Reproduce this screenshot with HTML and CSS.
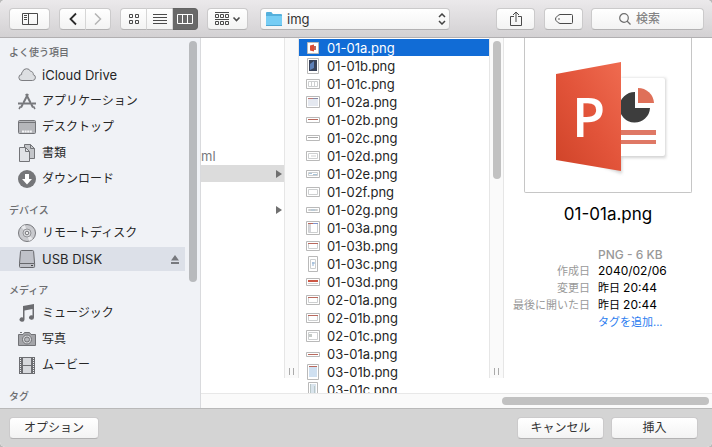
FILE: index.html
```html
<!DOCTYPE html>
<html lang="ja">
<head>
<meta charset="utf-8">
<title>img</title>
<link rel="stylesheet" href="styles.css">
</head>
<body>
<main class="dialog">
  <header class="toolbar">
    <button class="btn tool" aria-label="サイドバー">
      <svg width="16" height="12" viewBox="0 0 16 12" fill="none" stroke="#4a4a4a"><path d="M.5.5h15v11H.5zM6.500.5v11M2 2.500h3M2 4.500h3M2 6.500h3"/></svg>
    </button>
    <div class="group nav-group">
      <button class="btn" aria-label="戻る"><svg width="8" height="14" viewBox="0 0 8 14" fill="none" stroke="#2c2c2c" stroke-width="1.800"><path d="M7 1.500L1.500 7 7 12.500"/></svg></button>
      <button class="btn" aria-label="進む"><svg width="8" height="14" viewBox="0 0 8 14" fill="none" stroke="#b4b4b4" stroke-width="1.500"><path d="M1 1.500L6.500 7 1 12.500"/></svg></button>
    </div>
    <div class="group view-group">
      <button class="btn" aria-label="アイコン"><svg width="10" height="10" viewBox="0 0 10 10" fill="none" stroke="#4a4a4a"><path d="M.5.5h3v3h-3zM6.500.5h3v3h-3zM.5 6.500h3v3h-3zM6.500 6.500h3v3h-3z"/></svg></button>
      <button class="btn" aria-label="リスト"><svg width="14" height="10" viewBox="0 0 14 10" stroke="#4a4a4a"><path d="M0 .5h14M0 3.500h14M0 6.500h14M0 9.500h14"/></svg></button>
      <button class="btn on" aria-label="カラム"><svg width="16" height="10" viewBox="0 0 16 10" fill="none" stroke="#fff"><path d="M.5.5h15v9H.5zM5.500.5v9M10.500.5v9"/></svg></button>
    </div>
    <button class="btn tool" aria-label="グループ">
      <svg width="26" height="14" viewBox="0 0 26 14" fill="none" stroke="#4a4a4a"><path d="M0 .5h14M0 7.500h14M.5 2.500h3v3h-3zM5.500 2.500h3v3h-3zM10.500 2.500h3v3h-3zM.5 9.500h3v3h-3zM5.500 9.500h3v3h-3zM10.500 9.500h3v3h-3z"/><path d="M18.500 5.500l3 3 3-3" stroke-width="1.600"/></svg>
    </button>
    <label class="location">
      <svg class="folder" width="16" height="14" viewBox="0 0 16 14"><path d="M0 13V1q0-1 1-1h4q1 0 1 1l1 1h8q1 0 1 1v10z" fill="#55b0dc"/><path d="M0 4h16v9H0z" fill="#76cdf4"/><path d="M0 13.500h16" stroke="#4fa7d2"/></svg>
      <select class="popup" aria-label="場所"><option>img</option></select>
      <svg class="updown" width="8" height="12" viewBox="0 0 8 12" fill="none" stroke="#444" stroke-width="1.500"><path d="M1 4l3-3 3 3M1 8l3 3 3-3"/></svg>
    </label>
    <button class="btn share" aria-label="共有">
      <svg width="12" height="16" viewBox="0 0 12 16" fill="none" stroke="#4a4a4a"><path d="M4 5.500H.5v9h11v-9H8M6 11V1M3 4l3-3 3 3"/></svg>
    </button>
    <button class="btn tags" aria-label="タグ">
      <svg width="18" height="10" viewBox="0 0 18 10" fill="none" stroke="#4a4a4a"><path d="M5 .5h11.500q1 0 1 1v7q0 1-1 1H5Q3.500 9.500 1 6.500 0 5 1 3.500 3.500.5 5 .5z"/><circle cx="4" cy="5" r=".8" fill="#4a4a4a" stroke="none"/></svg>
    </button>
    <label class="search">
      <svg width="12" height="12" viewBox="0 0 12 12" fill="none" stroke="#6e6e6e" stroke-width="1.200"><circle cx="5" cy="5" r="4.300"/><path d="M8 8l3.500 3.500"/></svg>
      <input type="search" placeholder="検索" aria-label="検索">
    </label>
  </header>

  <div class="content">
    <nav class="sidebar">
      <div class="places">
        <section>
          <h2>よく使う項目</h2>
          <a href="#" class="latin"><svg viewBox="0 0 18 18" fill="#dddfe2" stroke="#7d7e82"><path d="M4 14.500h10.500a3 3 0 0 0 .7-5.900 2.600 2.600 0 0 0-2.600-3.200A4.300 4.300 0 0 0 4.500 5.800a2.500 2.500 0 0 0-.8 2.700A3 3 0 0 0 4 14.500z"/></svg>iCloud Drive</a>
          <a href="#"><svg viewBox="0 0 18 18" fill="none" stroke="#77787c"><path d="M10 2L3 15.500M8 2l7 13.500" stroke-width="2"/><path d="M0 11.500h4M6 11.500h6M14 11.500h4" stroke-width="2"/><path d="M2.500 14.500L1 17M15.500 14.500L17 17" stroke-width="1.500"/></svg>アプリケーション</a>
          <a href="#"><svg viewBox="0 0 18 18" fill="#b5b6ba" stroke="#737478"><rect x=".5" y="2.500" width="17" height="13" rx="1"/><path d="M1 4.500h16"/><path d="M4 13.500h10" stroke="#f4f4f6" stroke-width="2" stroke-dasharray="2 .6"/></svg>デスクトップ</a>
          <a href="#"><svg viewBox="0 0 18 18" fill="#c4c6ca" stroke="#737478"><path d="M6.500.5h6l4 4v10h-10z"/><path d="M12.500.5v4h4" fill="none"/><path d="M1.500 3.500h6l4 4v10h-10z" fill="#e0e2e6"/><path d="M7.500 3.500v4h4" fill="none"/></svg>書類</a>
          <a href="#"><svg viewBox="0 0 18 18"><circle cx="9" cy="9" r="9" fill="#757679"/><path d="M7 4h4v5h3l-5 5.500L4 9h3z" fill="#fff"/></svg>ダウンロード</a>
        </section>
        <section>
          <h2>デバイス</h2>
          <a href="#"><svg viewBox="0 0 18 18" fill="none" stroke="#77787c"><circle cx="9" cy="9" r="8.500" fill="#c9cace"/><path d="M9 9L3 3l4-2zM9 9l6 6-4 2z" fill="#e8e9ec" stroke="none"/><circle cx="9" cy="9" r="4" fill="#dcdde0" stroke="#929397"/><circle cx="9" cy="9" r="1.800" fill="#eee"/></svg>リモートディスク</a>
          <a href="#" class="latin current"><svg viewBox="0 0 18 18" fill="#bfc1c8" stroke="#66676b"><path d="M3.500.5h11q1 0 1.100 1l1 12v3q0 1-1 1H2.500q-1 0-1-1v-3l1-12q0-1 1-1z"/><path d="M1.500 13.500h15"/><path d="M13 15.500h2" stroke="#444"/></svg>USB DISK<svg class="eject" viewBox="0 0 8 9" fill="#77797e"><path d="M0 5.500L4 0l4 5.500zM0 7h8v2H0z"/></svg></a>
        </section>
        <section>
          <h2>メディア</h2>
          <a href="#"><svg viewBox="0 0 18 18" fill="#6b6c70"><path d="M5 2L16 0v13.500a2.500 2.200 0 1 1-1.500-2V5L6.500 6.500v9a2.500 2.200 0 1 1-1.500-2z"/></svg>ミュージック</a>
          <a href="#"><svg viewBox="0 0 18 18" fill="#a4a5a9" stroke="#717276"><path d="M.5 4.500h4.500l1.500-2h5l1.500 2h4.500v11H.5z"/><path d="M2 2.500h2"/><circle cx="9" cy="9.500" r="4.500" fill="#d6d7da"/><circle cx="9" cy="9.500" r="2.500" fill="#b5b6ba"/></svg>写真</a>
          <a href="#"><svg viewBox="0 0 18 18" fill="none"><path d="M1 1h16v17H1z" fill="#6d6e72"/><path d="M5 2h8v7H5zM5 10h8v7H5z" fill="#d7d9dd"/><path d="M2.500 2v16M15.500 2v16" stroke="#eef0f3" stroke-dasharray="1 1"/></svg>ムービー</a>
        </section>
        <section><h2>タグ</h2></section>
      </div>
      <div class="side-scroll"><i class="thumb"></i></div>
    </nav>

    <div class="browser">
      <div class="columns">
        <ul class="column parent">
          <li></li><li></li><li></li><li></li><li></li><li></li>
          <li>ml</li>
          <li class="open"><svg class="arrow" viewBox="0 0 6 8"><path d="M0 0l6 4-6 4z"/></svg></li>
          <li></li>
          <li><svg class="arrow" viewBox="0 0 6 8"><path d="M0 0l6 4-6 4z"/></svg></li>
        </ul>
        <div class="gutter"><i class="grip"></i></div>
        <ul class="column files">
          <li class="selected"><svg viewBox="0 0 16 16"><path class="page" d="M2.500 2.500h11v11h-11z"/><path d="M5 5.500l4-1v7l-4-1z" fill="#dc4b33"/><path d="M9 6h2v4H9z" fill="#b96a60"/></svg>01-01a.png</li>
          <li><svg viewBox="0 0 16 16"><path class="page" d="M2.500.5h11v15h-11z"/><path d="M4 2h8v11H4z" fill="#39435a"/><path d="M5 6l4-3v7l-4 2z" fill="#5d80b8"/></svg>01-01b.png</li>
          <li><svg viewBox="0 0 16 16"><path class="page" d="M1.500 3.500h13v9h-13z"/><path class="inner" d="M3.500 5.500h9v5h-9zM6.500 5.500v5M9.500 5.500v5"/></svg>01-01c.png</li>
          <li><svg viewBox="0 0 16 16"><path class="page" d="M1.500 2.500h13v11h-13z"/><path d="M3 5h10v7H3z" fill="#e4e8f0"/><path d="M3 4.500h5" stroke="#bf7b77"/><path d="M8 4.500h5" stroke="#8589a5"/></svg>01-02a.png</li>
          <li><svg viewBox="0 0 16 16"><path class="page" d="M1.500 5.500h13v5h-13z"/><path class="red" d="M3 7.500h10"/></svg>01-02b.png</li>
          <li><svg viewBox="0 0 16 16"><path class="page" d="M1.500 5.500h13v5h-13z"/><path d="M3 7.500h10" stroke="#aaa"/></svg>01-02c.png</li>
          <li><svg viewBox="0 0 16 16"><path class="page" d="M1.500 3.500h13v9h-13z"/><path class="inner" d="M3.500 5.500h9v5h-9zM6 8h5"/></svg>01-02d.png</li>
          <li><svg viewBox="0 0 16 16"><path class="page" d="M1.500 4.500h13v7h-13z"/><path class="inner" d="M3.500 6.500h9v3h-9z"/><path d="M4 7.500h3M8 8.500h4" stroke="#a9c5da"/></svg>01-02e.png</li>
          <li><svg viewBox="0 0 16 16"><path class="page" d="M1.500 3.500h13v9h-13z"/><path class="inner" d="M3.500 5.500h9v5h-9z"/></svg>01-02f.png</li>
          <li><svg viewBox="0 0 16 16"><path class="page" d="M1.500 5.500h13v5h-13z"/><path class="inner" d="M3.500 7.500h9v1h-9z"/><path d="M6 8h4" stroke="#a9c5da"/></svg>01-02g.png</li>
          <li><svg viewBox="0 0 16 16"><path class="page" d="M1.500 1.500h13v13h-13z"/><path class="inner" d="M3.500 3.500h9v9h-9z"/><path class="red" d="M3 3.500h5"/><path d="M8 3.500h5" stroke="#8093cb"/><path d="M4 4h2v8H4z" fill="#d5d5da"/></svg>01-03a.png</li>
          <li><svg viewBox="0 0 16 16"><path class="page" d="M1.500 3.500h13v9h-13z"/><path class="inner" d="M3.500 5.500h9v5h-9z"/><path class="red" d="M3 5.500h10"/></svg>01-03b.png</li>
          <li><svg viewBox="0 0 16 16"><path class="page" d="M3.500.5h9v15h-9z"/><path class="inner" d="M5.500 3.500h5v9h-5z"/><path d="M8 6v4M7 7h3" stroke="#8eafd2"/></svg>01-03c.png</li>
          <li><svg viewBox="0 0 16 16"><path class="page" d="M1.500 4.500h13v7h-13z"/><path d="M3 6h10v2H3z" fill="#cc5745"/><path class="inner" d="M3 9.500h10"/></svg>01-03d.png</li>
          <li><svg viewBox="0 0 16 16"><path class="page" d="M1.500 3.500h13v9h-13z"/><path class="inner" d="M3.500 5.500h9v5h-9z"/><path class="red" d="M3 5.500h10"/></svg>02-01a.png</li>
          <li><svg viewBox="0 0 16 16"><path class="page" d="M1.500 3.500h13v9h-13z"/><path class="inner" d="M3.500 5.500h9v5h-9z"/><path class="red" d="M3 5.500h10"/></svg>02-01b.png</li>
          <li><svg viewBox="0 0 16 16"><path class="page" d="M1.500 2.500h13v11h-13z"/><path class="inner" d="M3.500 4.500h9v7h-9z"/><path d="M4 6h3v3H4z" fill="#c5cac7"/></svg>02-01c.png</li>
          <li><svg viewBox="0 0 16 16"><path class="page" d="M1.500 6.500h13v4h-13z"/><path class="red" d="M3 8.500h10"/></svg>03-01a.png</li>
          <li><svg viewBox="0 0 16 16"><path class="page" d="M2.500.5h11v15h-11z"/><path d="M4 3h8v10H4z" fill="#cfe0f1"/><path class="red" d="M4 2.500h8"/></svg>03-01b.png</li>
          <li><svg viewBox="0 0 16 16"><path class="page" d="M3.500.5h9v15h-9z"/><path d="M5 2h6v12H5z" fill="#d9e4ed"/><path d="M5.500 2v11M9.500 4v8" stroke="#b9c7c8"/></svg>03-01c.png</li>
        </ul>
        <div class="gutter scrolls"><i class="thumb"></i><i class="grip"></i></div>
        <article class="preview">
          <div class="picture">
            <svg width="123" height="124" viewBox="0 0 123 124" role="img" aria-label="01-01a.png">
              <defs>
                <linearGradient id="cover" x1="0" y1="1" x2="1" y2="0"><stop offset="0" stop-color="#cf4328"/><stop offset=".5" stop-color="#e2543a"/><stop offset="1" stop-color="#ef6b50"/></linearGradient>
                <filter id="soft" x="-20%" y="-20%" width="140%" height="140%"><feGaussianBlur stdDeviation="1.500"/></filter>
              </defs>
              <path d="M15 98l60 22v-16h44V24H75z" fill="#bbb" opacity=".65" filter="url(#soft)"/>
              <rect x="60" y="24" width="58" height="78" rx="2" fill="#fff"/>
              <path d="M88 38v16h15a15.300 15.300 0 1 1-15-16z" fill="#3d3d3d"/>
              <path d="M91 34v15h16a16 16 0 0 0-16-15z" fill="#df7059"/>
              <path d="M74 76h35v5H74zM74 86h35v4H74z" fill="#df7865"/>
              <path d="M9 20L74 8v109L9 106z" fill="url(#cover)"/>
              <text x="25" y="83" class="letter">P</text>
            </svg>
          </div>
          <h1>01-01a.png</h1>
          <dl>
            <dt></dt><dd class="kind">PNG - 6 KB</dd>
            <dt>作成日</dt><dd><time>2040/02/06</time></dd>
            <dt>変更日</dt><dd>昨日 <time>20:44</time></dd>
            <dt>最後に開いた日</dt><dd>昨日 <time>20:44</time></dd>
            <dt></dt><dd><a href="#">タグを追加...</a></dd>
          </dl>
        </article>
      </div>
      <div class="hscroll"><i class="thumb"></i></div>
    </div>
  </div>

  <footer class="actions">
    <button class="btn options">オプション</button>
    <button class="btn">キャンセル</button>
    <button class="btn">挿入</button>
  </footer>
</main>
</body>
</html>
```
FILE: styles.css
```css
* { box-sizing: border-box; }
body {
  margin: 0;
  background: #b9b9b9;
  font: 12px/18px Inter, "Noto Sans CJK JP", sans-serif;
  color: #262626;
}
h1, h2, ul, dl, dd { margin: 0; padding: 0; }
ul { list-style: none; }
a { color: inherit; text-decoration: none; }
svg { display: block; flex: none; }

.dialog {
  display: flex;
  flex-direction: column;
  height: 100vh;
  overflow: hidden;
  border-radius: 5px;
  background: #fff;
}

/* Toolbar */
.toolbar {
  display: flex;
  align-items: center;
  flex: none;
  height: 38px;
  padding: 0 8px 0 9px;
  border-bottom: 1px solid #b1afb1;
  background: linear-gradient(#ebe9eb, #d3d1d3);
}
.btn, .popup, .search input {
  height: 22px;
  margin: 0;
  padding: 0;
  border: 1px solid #cbcacb;
  border-bottom-color: #b3b2b3;
  border-radius: 4px;
  background: linear-gradient(#fff, #f3f3f3);
  font: inherit;
  color: #333;
}
.btn {
  display: flex;
  align-items: center;
  justify-content: center;
}
.tool { width: 41px; }
.group { display: flex; }
.group .btn { width: 26px; }
.group .btn + .btn { border-left-color: #d6d6d6; border-top-left-radius: 0; border-bottom-left-radius: 0; }
.group .btn:not(:last-child) { border-right: 0; border-top-right-radius: 0; border-bottom-right-radius: 0; }
.nav-group { margin: 0 9px; }
.view-group { margin-right: 9px; }
.group .on { background: #696969; border-color: #636363; }
.location { display: grid; align-items: center; width: 190px; margin-left: 12px; }
.location > * { grid-area: 1 / 1; }
.popup { width: 100%; padding-left: 26px; appearance: none; font-size: 13px; }
.folder { z-index: 1; margin-left: 6px; }
.updown { z-index: 1; justify-self: end; margin-right: 4px; }
.share, .tags { width: 39px; }
.share { margin-left: auto; }
.tags { margin: 0 8px 0 9px; }
.search { display: grid; align-items: center; width: 113px; }
.search > * { grid-area: 1 / 1; }
.search svg { z-index: 1; margin-left: 28px; }
.search input { width: 100%; height: 22px; padding-left: 44px; appearance: none; }
.search input::placeholder { color: #858585; font-weight: 500; opacity: 1; }

/* Sidebar */
.content { display: flex; flex: 1; min-height: 0; }
.sidebar {
  display: flex;
  flex: none;
  width: 201px;
  border-right: 1px solid #d9dadd;
  background: #f0f2f6;
}
.places { flex: 1; padding-top: 4px; overflow: hidden; }
.places section { margin-bottom: 8px; padding-bottom: 1px; }
.places h2 {
  padding-left: 9px;
  font-size: 10px;
  font-weight: 500;
  line-height: 20px;
  color: #6c6d70;
}
.places a {
  display: flex;
  align-items: center;
  gap: 6px;
  height: 24px;
  margin-top: 1px;
  padding: 0 6px 0 18px;
}
.places a + a { margin-top: 2px; }
.places .latin { font-size: 13px; }
.places svg { width: 18px; height: 18px; }
.places .current { background: #dce0e8; }
.places .eject { width: 8px; height: 9px; margin-left: auto; }
.side-scroll { flex: none; width: 15px; padding: 3px 3px 0 4px; }
.thumb { display: block; border-radius: 4px; background: #c1c1c1; }
.side-scroll .thumb { height: 241px; background: #b8babd; }

/* Columns */
.browser { display: flex; flex-direction: column; flex: 1; min-width: 0; }
.columns { display: flex; flex: 1; min-height: 0; overflow: hidden; }
.column { flex: none; padding-top: 1px; overflow: hidden; font-size: 13px; }
.column li { display: flex; align-items: center; height: 17px; margin-bottom: 1px; white-space: nowrap; }
.parent { width: 83px; }
.parent li { color: #77797d; }
.parent .open { background: #dcdcdc; }
.arrow { width: 6px; height: 8px; margin: 0 2px 0 auto; fill: #707070; }
.files { width: 190px; }
.files li { gap: 6px; padding-left: 6px; }
.files svg { width: 16px; height: 16px; fill: none; }
.files .selected { background: #116cd6; color: #fff; }
.page { fill: #fff; stroke: #b9b9b9; }
.inner { stroke: #cdcfd0; }
.red { stroke: #b9695d; }
.gutter {
  display: flex;
  flex-direction: column;
  flex: none;
  width: 15px;
  margin-bottom: 15px;
  padding: 3px 2px 3px 3px;
  border: solid #e6e6e6;
  border-width: 0 1px;
  background: #fafafa;
}
.scrolls .thumb { height: 138px; }
.grip { width: 5px; height: 7px; margin: auto 0 0 1px; border: solid #aaa; border-width: 0 1px; }

/* Preview */
.preview { flex: 1; padding: 0 20px; }
.picture {
  display: flex;
  justify-content: center;
  height: 155px;
  padding-top: 16px;
  border: 1px solid #c6c6c6;
  border-top: 0;
  border-radius: 0 0 2px 2px;
}
.letter { font: 600 54px "Open Sans", sans-serif; fill: #fff; }
.preview h1 { margin-top: 9px; font-size: 17px; font-weight: 400; line-height: 24px; text-align: center; color: #000; }
.preview dl {
  display: grid;
  grid-template-columns: 86px 1fr;
  grid-auto-rows: 17px;
  column-gap: 8px;
  margin: 20px -20px 0;
  font-size: 11px;
  line-height: 17px;
}
.preview dt { text-align: right; color: #999; }
.preview dd { color: #000; white-space: nowrap; }
.preview time { font-size: 12px; line-height: 12px; }
.preview .kind { font-size: 12px; font-weight: 500; color: #999; }
.preview dl a { color: #2b7df0; }

.hscroll { flex: none; height: 15px; padding: 3px 3px 0; border-top: 1px solid #e8e8e8; background: #fafafa; }
.hscroll .thumb { width: 41%; height: 8px; margin-left: auto; }

/* Actions */
.actions {
  display: flex;
  align-items: center;
  gap: 7px;
  flex: none;
  height: 39px;
  padding: 0 14px 0 9px;
  border-top: 1px solid #b9b9b9;
  background: #d4d4d4;
}
.actions .btn { width: 87px; }
.actions .options { width: 90px; margin-right: auto; }
```
